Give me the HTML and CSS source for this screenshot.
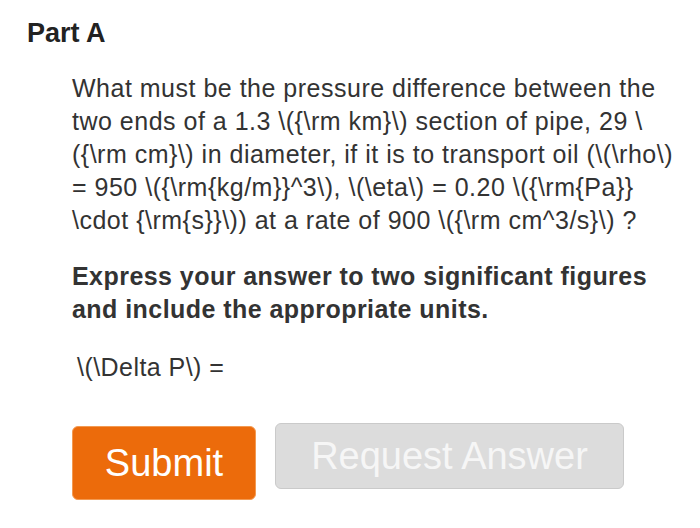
FILE: index.html
```html
<!DOCTYPE html>
<html>
<head>
<meta charset="utf-8">
<link rel="stylesheet" href="styles.css">
</head>
<body>
<div class="page">
  <h2 class="part-title">Part A</h2>
  <div class="content">
    <p class="question">What must be the pressure difference between the two ends of a 1.3 \({\rm km}\) section of pipe, 29 \<wbr>({\rm cm}\) in diameter, if it is to transport oil (\(\rho\) = 950 \({\rm{kg/m}}^3\), \(\eta\) = 0.20 \({\rm{Pa}} \cdot {\rm{s}}\)) at a rate of 900 \({\rm cm^3/s}\) ?</p>
    <p class="instructions">Express your answer to two significant figures and include the appropriate units.</p>
    <div class="answer-label">\(\Delta P\) =</div>
    <div class="actions">
      <button class="btn btn-submit">Submit</button>
      <button class="btn btn-request">Request Answer</button>
    </div>
  </div>
</div>
</body>
</html>
```
FILE: styles.css
```css
html, body {
  margin: 0;
  padding: 0;
  background: #ffffff;
}
.page {
  font-family: "Liberation Sans", Arial, Helvetica, sans-serif;
  color: #333333;
  padding: 17px 0 0 27px;
}
.part-title {
  margin: 0;
  font-size: 27px;
  line-height: 32px;
  font-weight: bold;
  color: #222222;
}
.content {
  padding-left: 45px;
  width: 605px;
  margin-top: 23px;
}
.question {
  margin: 0;
  font-size: 25px;
  line-height: 33px;
  letter-spacing: 0.5px;
}
.instructions {
  margin: 23px 0 0 0;
  font-size: 25px;
  line-height: 33px;
  letter-spacing: 0.45px;
  font-weight: bold;
}
.answer-label {
  margin-top: 25px;
  padding-left: 5px;
  font-size: 25px;
  line-height: 33px;
  letter-spacing: 0.45px;
}
.actions {
  margin-top: 39px;
  display: flex;
  align-items: flex-start;
  gap: 19px;
}
.btn {
  font-family: "Liberation Sans", Arial, Helvetica, sans-serif;
  font-size: 38px;
  border-radius: 6px;
  padding: 0;
  cursor: pointer;
}
.btn-submit {
  width: 184px;
  height: 74px;
  margin-top: 3px;
  background: #ec6b0b;
  border: 1px solid #f39a52;
  color: #ffffff;
}
.btn-request {
  width: 349px;
  height: 66px;
  background: #dcdcdc;
  border: 1px solid #cacaca;
  color: #f6f6f6;
}
```
